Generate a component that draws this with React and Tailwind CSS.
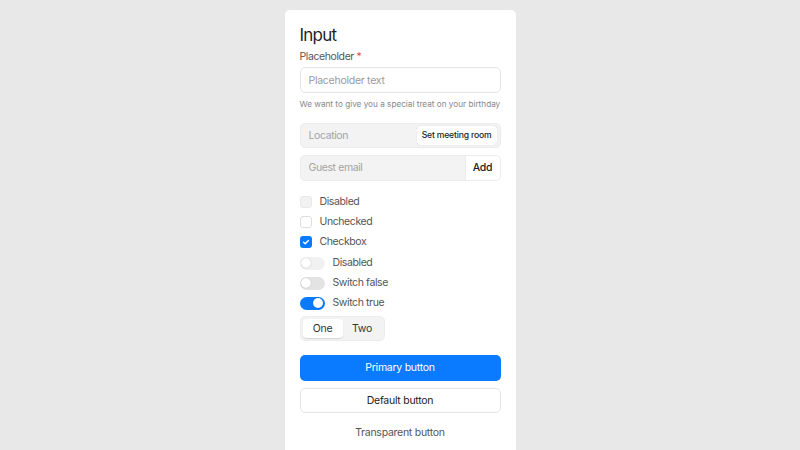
import React, { useState } from 'react';

const Check = ({ on, disabled, label }) => (
  <label className="flex items-center gap-[8px] h-[20px]">
    <span
      className={
        'w-[12px] h-[12px] rounded-[3px] flex items-center justify-center ' +
        (on
          ? 'bg-[#0a7aff]'
          : disabled
          ? 'bg-[#f2f2f2] border border-[#e8e8e8]'
          : 'bg-white border border-[#dedede]')
      }
    >
      {on && (
        <svg width="8" height="8" viewBox="0 0 8 8" fill="none">
          <path d="M1.6 4.2 3.2 5.7 6.4 2.4" stroke="white" strokeWidth="1.4" strokeLinecap="round" strokeLinejoin="round" />
        </svg>
      )}
    </span>
    <span className="text-[10.5px] text-[#555]">{label}</span>
  </label>
);

const Toggle = ({ on, disabled, label }) => (
  <label className="flex items-center gap-[8px] h-[20px]">
    <span
      className={
        'relative w-[25px] h-[13px] rounded-full ' +
        (on ? 'bg-[#0a7aff]' : disabled ? 'bg-[#f1f1f1]' : 'bg-[#e3e3e3]')
      }
    >
      <span
        className={
          'absolute top-[1.5px] w-[10px] h-[10px] rounded-full bg-white shadow-[0_0_1px_rgba(0,0,0,0.35)] ' +
          (on ? 'left-[13.5px]' : 'left-[1.5px]')
        }
      />
    </span>
    <span className="text-[10.5px] text-[#555]">{label}</span>
  </label>
);

export default function App() {
  const [seg, setSeg] = useState('one');

  return (
    <div
      className="min-h-[450px] w-full bg-[#e8e8e8] flex justify-center pt-[10px]"
      style={{ fontFamily: 'Inter, "Noto Sans", sans-serif' }}
    >
      <div className="w-[231px] h-[440px] bg-white rounded-t-[5px] px-[15px] pt-[15px] tracking-[-0.025em]">
        <h1 className="text-[17px] leading-[20px] text-[#1f1f1f] tracking-[-0.045em]">Input</h1>
        <div className="mt-[5px] text-[10.5px] leading-[14px] text-[#555]">
          Placeholder <span className="text-[#e5484d]">*</span>
        </div>
        <input
          className="mt-[3px] w-full h-[26px] rounded-[5px] border border-[#e5e5e5] px-[8px] text-[10.5px] tracking-[-0.025em] outline-none placeholder:text-[#9a9a9a]"
          placeholder="Placeholder text"
        />
        <p className="mt-[5px] text-[8.2px] leading-[12px] text-[#888] tracking-normal whitespace-nowrap">
          We want to give you a special treat on your birthday
        </p>

        <div className="mt-[13px] h-[25px] w-full rounded-[5px] bg-[#f3f3f3] border border-[#ececec] flex items-center pl-[8px] pr-[3px]">
          <span className="flex-1 text-[10.5px] text-[#a3a3a3]">Location</span>
          <button className="h-[19px] px-[5px] rounded-[4px] bg-white text-[8.6px] font-medium text-[#222] tracking-[-0.02em] shadow-[0_0_1px_rgba(0,0,0,0.2)]">
            Set meeting room
          </button>
        </div>

        <div className="mt-[7px] h-[26px] w-full rounded-[5px] bg-[#f3f3f3] border border-[#ececec] flex items-stretch overflow-hidden">
          <span className="flex-1 flex items-center pl-[8px] text-[10.5px] text-[#a3a3a3]">Guest email</span>
          <button className="w-[35px] bg-white border-l border-[#ececec] text-[10.5px] font-medium text-[#222] tracking-[-0.025em]">
            Add
          </button>
        </div>

        <div className="mt-[11px] flex flex-col">
          <Check disabled label="Disabled" />
          <Check label="Unchecked" />
          <Check on label="Checkbox" />
          <div className="h-[1px]" />
          <Toggle disabled label="Disabled" />
          <Toggle label="Switch false" />
          <Toggle on label="Switch true" />
        </div>

        <div className="mt-[3px] inline-flex h-[25px] rounded-[5px] bg-[#f3f3f3] p-[2px] border border-[#ededed]">
          <button
            onClick={() => setSeg('one')}
            className={
              'w-[40px] rounded-[4px] text-[10.5px] text-[#333] tracking-[-0.025em] ' +
              (seg === 'one' ? 'bg-white shadow-[0_1px_1px_rgba(0,0,0,0.12)]' : '')
            }
          >
            One
          </button>
          <button
            onClick={() => setSeg('two')}
            className={
              'w-[39px] rounded-[4px] text-[10.5px] text-[#333] tracking-[-0.025em] ' +
              (seg === 'two' ? 'bg-white shadow-[0_1px_1px_rgba(0,0,0,0.12)]' : '')
            }
          >
            Two
          </button>
        </div>

        <button className="block mt-[14px] w-full h-[26px] rounded-[5px] bg-[#0a7aff] text-white text-[10.5px] tracking-[-0.025em]">
          Primary button
        </button>
        <button className="block mt-[7px] w-full h-[25px] rounded-[5px] bg-white border border-[#e5e5e5] text-[10.5px] text-[#222] tracking-[-0.025em]">
          Default button
        </button>
        <button className="block mt-[7px] w-full h-[25px] text-[10.5px] text-[#555] tracking-[-0.025em]">
          Transparent button
        </button>
      </div>
    </div>
  );
}
